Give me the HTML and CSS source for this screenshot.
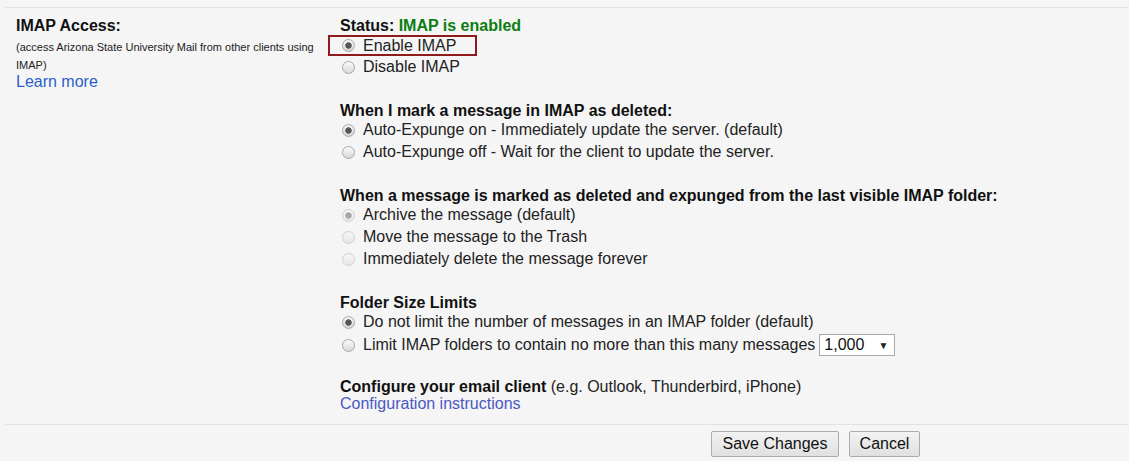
FILE: index.html
```html
<!DOCTYPE html>
<html>
<head>
<meta charset="utf-8">
<link rel="stylesheet" href="styles.css">
</head>
<body>
<div class="panel">
  <div class="setting">
    <div class="label-col">
      <div class="label-title">IMAP Access:</div>
      <div class="label-note">(access Arizona State University Mail from other clients using IMAP)</div>
      <a class="link learn" href="#">Learn more</a>
    </div>
    <div class="value-col">
      <div class="section first">
        <div class="heading">Status: <span class="ok">IMAP is enabled</span></div>
        <label class="row hl"><input type="radio" class="radio" name="imap" checked>Enable IMAP</label>
        <label class="row"><input type="radio" class="radio" name="imap">Disable IMAP</label>
      </div>
      <div class="section">
        <div class="heading">When I mark a message in IMAP as deleted:</div>
        <label class="row"><input type="radio" class="radio" name="exp" checked>Auto-Expunge on - Immediately update the server. (default)</label>
        <label class="row"><input type="radio" class="radio" name="exp">Auto-Expunge off - Wait for the client to update the server.</label>
      </div>
      <div class="section">
        <div class="heading">When a message is marked as deleted and expunged from the last visible IMAP folder:</div>
        <label class="row"><input type="radio" class="radio" name="del" checked disabled>Archive the message (default)</label>
        <label class="row"><input type="radio" class="radio" name="del" disabled>Move the message to the Trash</label>
        <label class="row"><input type="radio" class="radio" name="del" disabled>Immediately delete the message forever</label>
      </div>
      <div class="section">
        <div class="heading">Folder Size Limits</div>
        <label class="row"><input type="radio" class="radio" name="lim" checked>Do not limit the number of messages in an IMAP folder (default)</label>
        <label class="row sel-row"><input type="radio" class="radio" name="lim">Limit IMAP folders to contain no more than this many messages <span class="select"><span class="select-val">1,000</span><span class="caret">&#9660;</span></span></label>
      </div>
      <div class="section last">
        <div class="heading">Configure your email client <span class="plain">(e.g. Outlook, Thunderbird, iPhone)</span></div>
        <a class="link config" href="#">Configuration instructions</a>
      </div>
    </div>
  </div>
  <div class="actions">
    <button class="btn save">Save Changes</button>
    <button class="btn cancel">Cancel</button>
  </div>
</div>
</body>
</html>
```
FILE: styles.css
```css
html, body {
  margin: 0;
  padding: 0;
  background: #f5f5f5;
}
body {
  font-family: "Liberation Sans", Arial, sans-serif;
  color: #222;
  font-size: 16px;
}
.panel {
  margin: 7px 0 0 5px;
  border-top: 1px solid #e2e2e2;
}
.setting {
  display: flex;
  padding: 9px 0 11px 0;
  border-bottom: 1px solid #e2e2e2;
}
.label-col {
  width: 317px;
  padding: 0 7px 0 11px;
  flex: none;
  display: flex;
  flex-direction: column;
  align-items: flex-start;
}
.label-title {
  font-weight: bold;
  color: #111;
  line-height: 17px;
}
.label-note {
  margin-top: 4px;
  font-size: 11px;
  line-height: 18px;
  color: #222;
}
.link {
  color: #2a5fc9;
  text-decoration: none;
}
.learn {
  line-height: 16px;
}
.value-col {
  display: flex;
  flex-direction: column;
}
.section {
  margin-top: 24px;
  display: flex;
  flex-direction: column;
  align-items: flex-start;
}
.section.first {
  margin-top: 0;
}
.section.last {
  margin-top: 21px;
}
.heading {
  font-weight: bold;
  color: #111;
  line-height: 17px;
}
.heading .ok {
  color: #0b7d12;
}
.heading .plain {
  font-weight: normal;
  color: #222;
}
.row {
  display: flex;
  align-items: center;
  height: 22px;
  color: #222;
  white-space: nowrap;
}
.row.hl {
  height: 17px;
  margin-top: 1px;
  border: 2px solid #8e1a1a;
  margin-left: -12px;
  padding: 0 19px 0 10px;
}
.radio {
  appearance: none;
  -webkit-appearance: none;
  width: 13px;
  height: 13px;
  margin: 0 8px 0 2px;
  border: 1px solid #a8a8a8;
  border-radius: 50%;
  background: linear-gradient(#fbfbfb, #d8d8d8);
  flex: none;
}
.radio:checked {
  background: radial-gradient(circle, #555 0 2.8px, rgba(85,85,85,0) 3.6px), linear-gradient(#f6f6f6, #d4d4d4);
}
.radio:disabled {
  border-color: #cfcfcf;
  background: linear-gradient(#f7f7f7, #e6e6e6);
}
.radio:disabled:checked {
  background: radial-gradient(circle, #a6a6a6 0 2.8px, rgba(166,166,166,0) 3.6px), linear-gradient(#f7f7f7, #e6e6e6);
}
.sel-row {
  height: 24px;
}
.select {
  display: inline-flex;
  align-items: center;
  justify-content: space-between;
  box-sizing: border-box;
  width: 76px;
  height: 22px;
  margin-left: 4px;
  padding: 0 6px 0 4px;
  background: #fff;
  border: 1px solid #a9a9a9;
  color: #111;
}
.caret {
  font-size: 10px;
  color: #222;
}
.config {
  line-height: 18px;
  color: #4a58c4;
}
.actions {
  display: flex;
  gap: 10px;
  padding: 6px 0 0 706px;
}
.btn {
  font-family: "Liberation Sans", Arial, sans-serif;
  font-size: 16px;
  color: #111;
  height: 26px;
  padding: 0;
  white-space: nowrap;
  border: 1px solid #acacac;
  border-radius: 2px;
  background: linear-gradient(#f2f2f2, #e0e0e0);
}
.save {
  width: 128px;
}
.cancel {
  width: 71px;
}
```
